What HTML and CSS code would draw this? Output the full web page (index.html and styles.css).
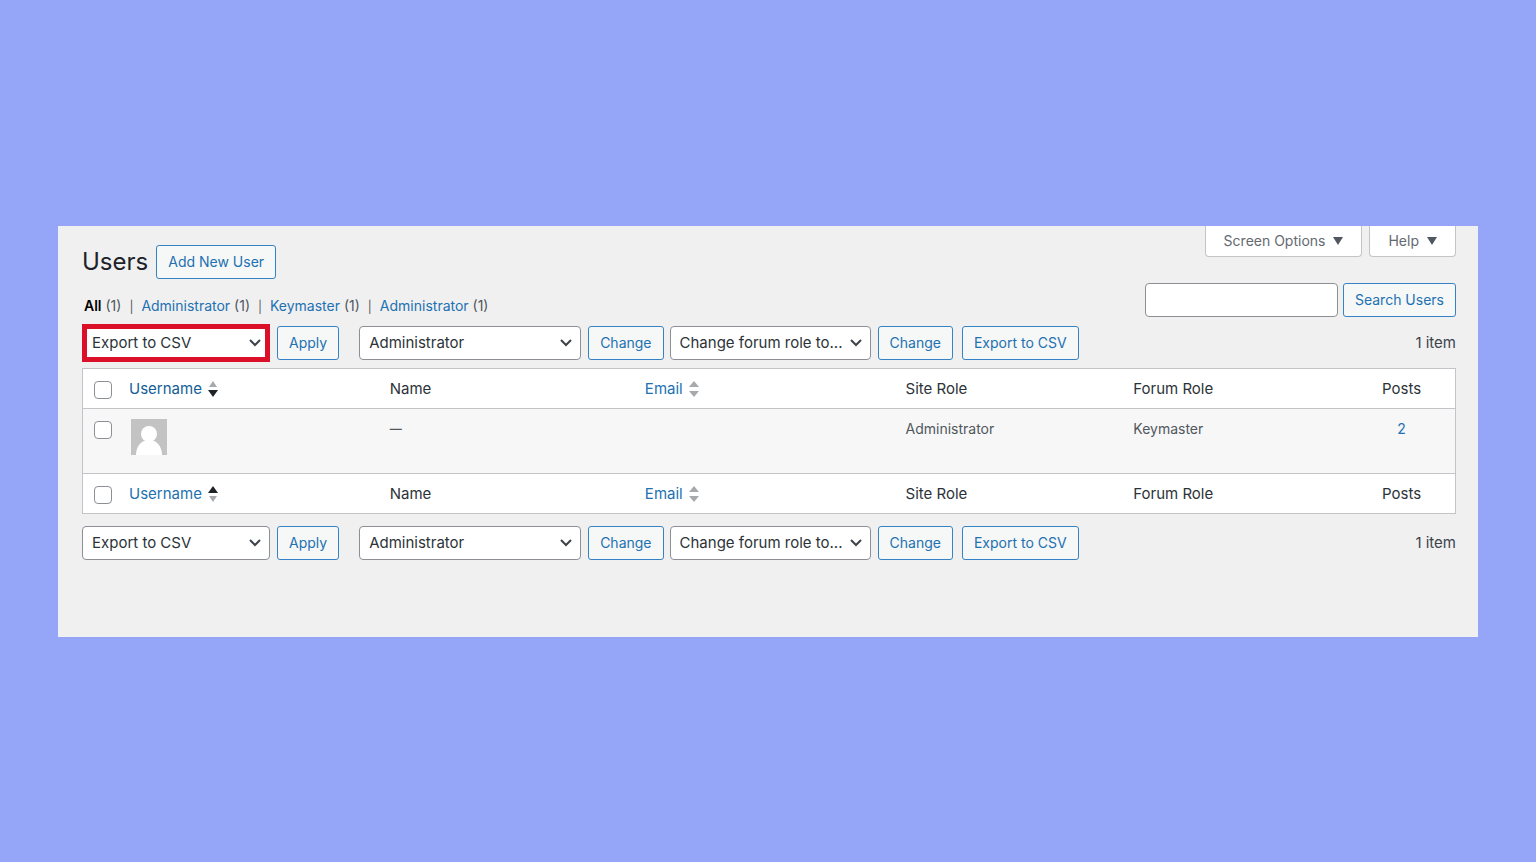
FILE: index.html
```
<!DOCTYPE html>
<html lang="en">
<head>
  <meta charset="UTF-8" />
  <meta name="viewport" content="width=device-width, initial-scale=1.0"/>
  <title>Users</title>
  <link rel="stylesheet" href="styles.css">
</head>
<body>

<main class="panel">

  <!-- TITLE + SCREEN TABS -->
  <header class="page-header">
    <div class="page-title">
      <h1>Users</h1>
      <button type="button" class="button">Add New User</button>
    </div>
    <div class="screen-tabs">
      <button type="button" class="tab">Screen Options <svg width="10" height="8" viewBox="0 0 10 8" aria-hidden="true"><path d="M0 0h10L5 8z"/></svg></button>
      <button type="button" class="tab">Help <svg width="10" height="8" viewBox="0 0 10 8" aria-hidden="true"><path d="M0 0h10L5 8z"/></svg></button>
    </div>
  </header>

  <!-- ROLE FILTERS + SEARCH -->
  <div class="filter-row">
    <ul class="role-filters">
      <li><a href="#" class="current">All</a> (1)</li>
      <li><a href="#">Administrator</a> (1)</li>
      <li><a href="#">Keymaster</a> (1)</li>
      <li><a href="#">Administrator</a> (1)</li>
    </ul>
    <form class="search-box">
      <input type="search" id="user-search" aria-label="Search Users">
      <button type="button" class="button">Search Users</button>
    </form>
  </div>

  <div class="tablenav top">
    <div class="actions bulk">
      <select class="select-bulk highlighted" aria-label="Bulk action"><option>Export to CSV</option></select>
      <button type="button" class="button">Apply</button>
    </div>
    <div class="actions">
      <select class="select-role" aria-label="Change role to"><option>Administrator</option></select>
      <button type="button" class="button">Change</button>
    </div>
    <div class="actions">
      <select class="select-forum" aria-label="Change forum role to"><option>Change forum role to...</option></select>
      <button type="button" class="button">Change</button>
    </div>
    <button type="button" class="button export">Export to CSV</button>
    <span class="item-count">1 item</span>
  </div>

  <table class="users-table">
    <thead>
      <tr>
        <th class="col-check"><input type="checkbox" aria-label="Select all"></th>
        <th class="col-username"><a href="#" class="sorted">Username <svg class="sort" width="10" height="16" viewBox="0 0 10 16" aria-hidden="true"><path d="M5 0l4 6H1z"/><path class="on" d="M0 9h10l-5 7z"/></svg></a></th>
        <th class="col-name">Name</th>
        <th class="col-email"><a href="#">Email <svg class="sort" width="10" height="16" viewBox="0 0 10 16" aria-hidden="true"><path d="M5 0l5 6H0z"/><path d="M0 10h10l-5 6z"/></svg></a></th>
        <th class="col-site">Site Role</th>
        <th class="col-forum">Forum Role</th>
        <th class="col-posts">Posts</th>
      </tr>
    </thead>
    <tbody>
      <tr>
        <td class="col-check"><input type="checkbox" aria-label="Select user"></td>
        <td>
          <svg class="avatar" width="36" height="36" viewBox="0 0 36 36" role="img" aria-label="Avatar">
            <rect width="36" height="36" fill="#c3c3c3"/>
            <circle cx="18" cy="15" r="8" fill="#fff"/>
            <path d="M5 36c0-5 2-10 6-13 2-2 12-2 14 0 4 3 6 8 6 13z" fill="#fff"/>
          </svg>
        </td>
        <td class="empty">—</td>
        <td></td>
        <td>Administrator</td>
        <td>Keymaster</td>
        <td class="col-posts"><a href="#">2</a></td>
      </tr>
    </tbody>
    <tfoot>
      <tr>
        <th class="col-check"><input type="checkbox" aria-label="Select all"></th>
        <th><a href="#">Username <svg class="sort" width="10" height="16" viewBox="0 0 10 16" aria-hidden="true"><path class="on" d="M5 0l5 7H0z"/><path d="M1 10h8l-4 6z"/></svg></a></th>
        <th>Name</th>
        <th><a href="#">Email <svg class="sort" width="10" height="16" viewBox="0 0 10 16" aria-hidden="true"><path d="M5 0l5 6H0z"/><path d="M0 10h10l-5 6z"/></svg></a></th>
        <th>Site Role</th>
        <th>Forum Role</th>
        <th class="col-posts">Posts</th>
      </tr>
    </tfoot>
  </table>

  <div class="tablenav bottom">
    <div class="actions bulk">
      <select class="select-bulk" aria-label="Bulk action"><option>Export to CSV</option></select>
      <button type="button" class="button">Apply</button>
    </div>
    <div class="actions">
      <select class="select-role" aria-label="Change role to"><option>Administrator</option></select>
      <button type="button" class="button">Change</button>
    </div>
    <div class="actions">
      <select class="select-forum" aria-label="Change forum role to"><option>Change forum role to...</option></select>
      <button type="button" class="button">Change</button>
    </div>
    <button type="button" class="button export">Export to CSV</button>
    <span class="item-count">1 item</span>
  </div>

</main>

</body>
</html>
```
FILE: styles.css
```
* {
  box-sizing: border-box;
}
body {
  margin: 0;
  min-height: 100vh;
  padding: 0 58px;
  display: flex;
  align-items: center;
  background: #95a6f9;
  font-family: Inter, "Liberation Sans", sans-serif;
  font-size: 15px;
  line-height: 20px;
  color: #3c434a;
}
.panel {
  flex: 1;
  padding: 0 22px 77px 24px;
  background: #f0f0f1;
}
a {
  color: #2271b1;
  text-decoration: none;
}

/* HEADER */
.page-header {
  display: flex;
  justify-content: space-between;
  align-items: flex-start;
}
.page-title {
  display: flex;
  align-items: center;
  gap: 8px;
  padding-top: 19px;
}
h1 {
  margin: 0;
  font-size: 24px;
  font-weight: 400;
  line-height: 34px;
  color: #1d2327;
}
.screen-tabs {
  display: flex;
  gap: 7px;
}
.tab {
  height: 31px;
  padding: 0 18px;
  display: flex;
  align-items: center;
  gap: 8px;
  border: 1px solid #c3c4c7;
  border-top: 0;
  border-radius: 0 0 4px 4px;
  background: #fff;
  font: inherit;
  font-size: 14px;
  color: #646970;
  cursor: pointer;
}
.tab svg {
  fill: #50575e;
}

/* CONTROLS */
.button {
  height: 34px;
  padding: 0 11px;
  border: 1px solid #3582c4;
  border-radius: 3px;
  background: #f6f7f7;
  font: inherit;
  font-size: 14px;
  color: #2271b1;
  white-space: nowrap;
  cursor: pointer;
}
input[type="search"],
select {
  height: 34px;
  border: 1px solid #8c8f94;
  border-radius: 4px;
  background: #fff;
  font: inherit;
  color: #2c3338;
}
select {
  appearance: none;
  padding: 0 28px 0 9px;
  background: #fff url("data:image/svg+xml,%3Csvg xmlns='http://www.w3.org/2000/svg' width='12' height='8' viewBox='0 0 12 8'%3E%3Cpath d='M1 1l5 5 5-5' fill='none' stroke='%233c434a' stroke-width='2'/%3E%3C/svg%3E") no-repeat right 8px center;
}
input[type="checkbox"] {
  appearance: none;
  display: block;
  width: 18px;
  height: 18px;
  margin: 0;
  border: 1px solid #8c8f94;
  border-radius: 4px;
  background: #fff;
}

/* FILTERS */
.filter-row {
  display: flex;
  justify-content: space-between;
  align-items: flex-end;
  margin-top: 4px;
}
.role-filters {
  display: flex;
  margin: 0;
  padding: 0 0 0 2px;
  list-style: none;
  font-size: 14px;
  color: #50575e;
}
.role-filters li + li::before {
  content: "|";
  margin: 0 8px;
  font-size: 12px;
}
.role-filters .current {
  font-weight: 600;
  color: #000;
}
.search-box {
  display: flex;
  gap: 5px;
}
.search-box input {
  width: 193px;
}

/* TABLE NAV */
.tablenav {
  display: flex;
  align-items: center;
}
.tablenav.top {
  margin: 9px 0 8px;
}
.tablenav.bottom {
  margin-top: 12px;
}
.actions {
  display: flex;
  align-items: center;
  gap: 7px;
  margin-right: 6px;
}
.actions.bulk {
  margin-right: 20px;
}
.select-bulk {
  width: 188px;
}
.select-role {
  width: 222px;
}
.select-forum {
  width: 201px;
}
.export {
  margin-left: 3px;
}
.item-count {
  margin-left: auto;
}
select.highlighted {
  height: 38px;
  margin: -2px 0;
  padding-left: 5px;
  border: 5px solid #db0f27;
  border-radius: 0;
  background-position: right 4px center;
}

/* TABLE */
.users-table {
  width: 100%;
  table-layout: fixed;
  border: 1px solid #c3c4c7;
  border-spacing: 0;
  background: #fff;
}
th,
td {
  padding: 10px 10px 9px;
  font-weight: 400;
  text-align: left;
  vertical-align: top;
}
th {
  color: #2c3338;
}
thead th {
  border-bottom: 1px solid #c3c4c7;
}
tfoot th {
  border-top: 1px solid #c3c4c7;
}
td {
  height: 64px;
  background: #f7f7f7;
  font-size: 14px;
  color: #50575e;
}
td.empty {
  font-size: 12px;
  font-weight: 600;
}
th a {
  display: flex;
  align-items: center;
  gap: 6px;
}
th a.sorted {
  color: #135e96;
}
.sort {
  fill: #a7aaad;
}
.sort .on {
  fill: #1d2327;
}
.col-check {
  width: 36px;
  padding: 12px 0 0 11px;
}
.col-username {
  width: 19%;
}
.col-name {
  width: 18.6%;
}
.col-email {
  width: 19%;
}
.col-site {
  width: 16.6%;
}
.col-forum {
  width: 16.4%;
}
.col-posts {
  text-align: center;
}
.avatar {
  display: block;
  margin-left: 2px;
}
```
